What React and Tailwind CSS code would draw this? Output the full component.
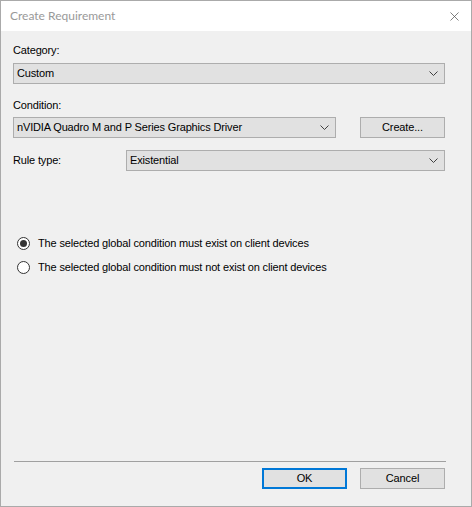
import { X } from "lucide-react"

const Chevron = () => (
    <svg width="9" height="5" viewBox="0 0 9 5" className="shrink-0">
        <path d="M0.5 0.5 L4.5 4.5 L8.5 0.5" fill="none" stroke="#404040" strokeWidth="1" />
    </svg>
)

const Combo = ({ text, className = "" }) => (
    <div className={`h-[21px] flex items-center justify-between border border-[#adadad] bg-[#e1e1e1] pl-[3px] pr-[6px] ${className}`}>
        <span>{text}</span>
        <Chevron />
    </div>
)

const Button = ({ children, focused }) => (
    <button
        className={`w-[85px] h-[21px] flex items-center justify-center bg-[#e1e1e1] ${focused ? "border-2 border-[#0078d7]" : "border border-[#adadad]"}`}
    >
        {children}
    </button>
)

const Radio = ({ checked, label }) => (
    <label className="flex items-center gap-[8px] h-[13px] leading-[13px]">
        <span className="w-[13px] h-[13px] rounded-full border border-[#333] bg-white flex items-center justify-center">
            {checked && <span className="w-[7px] h-[7px] rounded-full bg-[#333]" />}
        </span>
        <span>{label}</span>
    </label>
)

export default function App() {
    return (
        <div className="w-[472px] h-[507px] border border-[#aaaaaa] bg-[#f0f0f0] flex flex-col text-[11px] tracking-[-0.15px] text-black font-['Liberation_Sans',Arial,sans-serif]">
            <div className="h-[30px] bg-white flex items-center justify-between pl-[9px] pr-[9px] shrink-0">
                <span className="text-[12px] tracking-normal text-[#999999] font-['Lato',sans-serif]">Create Requirement</span>
                <X size={15} strokeWidth={1.2} color="#555" />
            </div>
            <div className="flex-1 flex flex-col pl-[12px] pr-[26px]">
                <div className="mt-[13px] h-[13px] leading-[13px]">Category:</div>
                <Combo text="Custom" className="mt-[6px]" />
                <div className="mt-[15px] h-[13px] leading-[13px]">Condition:</div>
                <div className="mt-[5px] flex items-center justify-between">
                    <Combo text="nVIDIA Quadro M and P Series Graphics Driver" className="w-[323px]" />
                    <div className="-mt-[1px]">
                        <Button>Create...</Button>
                    </div>
                </div>
                <div className="mt-[12px] flex items-center">
                    <span className="w-[113px]">Rule type:</span>
                    <Combo text="Existential" className="flex-1" />
                </div>
                <div className="mt-[66px] flex flex-col gap-[11px] pl-[4px]">
                    <Radio checked label="The selected global condition must exist on client devices" />
                    <Radio label="The selected global condition must not exist on client devices" />
                </div>
                <div className="flex-1" />
                <div className="h-[1px] bg-[#a0a0a0] ml-[1px] mr-[-1px]" />
                <div className="mt-[6px] mb-[17px] flex justify-end gap-[13px]">
                    <Button focused>OK</Button>
                    <Button>Cancel</Button>
                </div>
            </div>
        </div>
    )
}
